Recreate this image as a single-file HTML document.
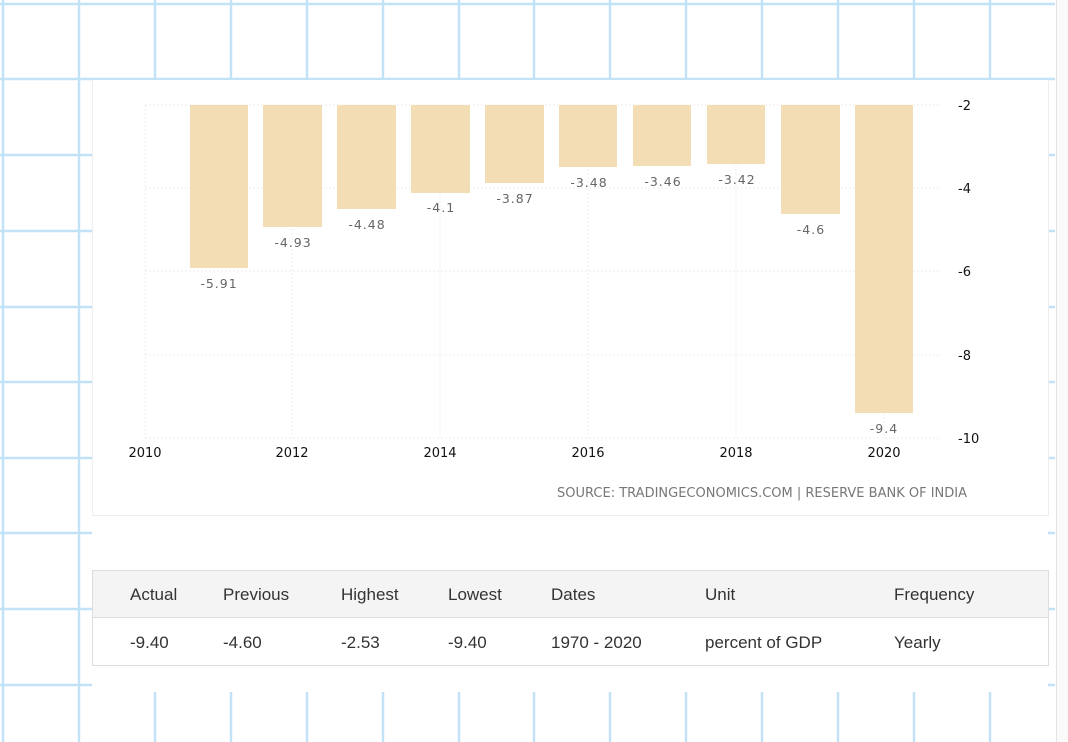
<!DOCTYPE html>
<html><head><meta charset="utf-8"><style>
body{margin:0;width:1068px;height:742px;overflow:hidden;background:#fff;font-family:"Liberation Sans",sans-serif;position:relative}
.g{position:absolute;left:0;top:0}
.panel{position:absolute;left:92px;top:80px;width:956px;height:612px;background:#fff}
.chart{position:absolute;left:92px;top:80px;width:955px;height:435px;border:1px solid #eee;border-top:none}
.tb{position:absolute;left:92px;top:570px;width:955px;height:94px;border:1px solid #ddd;font-size:17px;color:#333}
.hd{position:absolute;left:0;top:0;width:955px;height:46px;background:#f4f4f4;border-bottom:1px solid #ddd}
.c{position:absolute;line-height:20px}
</style></head><body>
<svg class="g" width="1068" height="742">
<g stroke="#c2e3f7" stroke-width="2.5">
<line x1="0" y1="4" x2="1055" y2="4"/>
<line x1="0" y1="79" x2="1055" y2="79"/>
<line x1="0" y1="155" x2="1055" y2="155"/>
<line x1="0" y1="231" x2="1055" y2="231"/>
<line x1="0" y1="307" x2="1055" y2="307"/>
<line x1="0" y1="382" x2="1055" y2="382"/>
<line x1="0" y1="458" x2="1055" y2="458"/>
<line x1="0" y1="533" x2="1055" y2="533"/>
<line x1="0" y1="609" x2="1055" y2="609"/>
<line x1="0" y1="685" x2="1055" y2="685"/>
<line x1="3" y1="0" x2="3" y2="742"/><line x1="79" y1="0" x2="79" y2="742"/>
<line x1="155" y1="0" x2="155" y2="742"/><line x1="231" y1="0" x2="231" y2="742"/>
<line x1="307" y1="0" x2="307" y2="742"/><line x1="383" y1="0" x2="383" y2="742"/>
<line x1="459" y1="0" x2="459" y2="742"/><line x1="534" y1="0" x2="534" y2="742"/>
<line x1="610" y1="0" x2="610" y2="742"/><line x1="686" y1="0" x2="686" y2="742"/>
<line x1="762" y1="0" x2="762" y2="742"/><line x1="838" y1="0" x2="838" y2="742"/>
<line x1="914" y1="0" x2="914" y2="742"/><line x1="990" y1="0" x2="990" y2="742"/>
</g>
<rect x="1056" y="0" width="12" height="742" fill="#fafafa"/>
<line x1="1056.5" y1="0" x2="1056.5" y2="742" stroke="#e5e5e5"/>
</svg>
<div class="panel"></div>
<div class="chart"></div>
<svg class="g" width="1068" height="742" style="font-family:'DejaVu Sans',sans-serif">
<g stroke="#ececec" stroke-dasharray="2,2">
<line x1="145" y1="105" x2="940" y2="105"/>
<line x1="145" y1="188" x2="940" y2="188"/>
<line x1="145" y1="271" x2="940" y2="271"/>
<line x1="145" y1="355" x2="940" y2="355"/>
<line x1="145" y1="438" x2="940" y2="438"/>
<line x1="145" y1="105" x2="145" y2="438"/>
<line x1="292" y1="105" x2="292" y2="438"/>
<line x1="440" y1="105" x2="440" y2="438"/>
<line x1="588" y1="105" x2="588" y2="438"/>
<line x1="736" y1="105" x2="736" y2="438"/>
<line x1="884" y1="105" x2="884" y2="438"/>
</g>
<g fill="#f3ddb4">
<rect x="190" y="105" width="58" height="163"/>
<rect x="263" y="105" width="59" height="122"/>
<rect x="337" y="105" width="59" height="104"/>
<rect x="411" y="105" width="59" height="88"/>
<rect x="485" y="105" width="59" height="78"/>
<rect x="559" y="105" width="58" height="62"/>
<rect x="633" y="105" width="58" height="61"/>
<rect x="707" y="105" width="58" height="59"/>
<rect x="781" y="105" width="59" height="109"/>
<rect x="855" y="105" width="58" height="308"/>
</g>
<g fill="#666" font-size="12.5" text-anchor="middle" letter-spacing="1">
<text x="219" y="288">-5.91</text>
<text x="293" y="247">-4.93</text>
<text x="367" y="229">-4.48</text>
<text x="441" y="212">-4.1</text>
<text x="515" y="203">-3.87</text>
<text x="589" y="187">-3.48</text>
<text x="663" y="186">-3.46</text>
<text x="737" y="184">-3.42</text>
<text x="811" y="234">-4.6</text>
<text x="884" y="433">-9.4</text>
</g>
<g fill="#111" font-size="13">
<text x="958" y="110">-2</text>
<text x="958" y="193">-4</text>
<text x="958" y="276">-6</text>
<text x="958" y="360">-8</text>
<text x="958" y="443">-10</text>
</g>
<g fill="#111" font-size="13" text-anchor="middle">
<text x="145" y="457">2010</text>
<text x="292" y="457">2012</text>
<text x="440" y="457">2014</text>
<text x="588" y="457">2016</text>
<text x="736" y="457">2018</text>
<text x="884" y="457">2020</text>
</g>
<text x="967" y="497" fill="#777" font-size="13" text-anchor="end">SOURCE: TRADINGECONOMICS.COM | RESERVE BANK OF INDIA</text>
</svg>
<div class="tb">
<div class="hd"></div>
<div class="c" style="left:37px;top:14px">Actual</div>
<div class="c" style="left:130px;top:14px">Previous</div>
<div class="c" style="left:248px;top:14px">Highest</div>
<div class="c" style="left:355px;top:14px">Lowest</div>
<div class="c" style="left:458px;top:14px">Dates</div>
<div class="c" style="left:612px;top:14px">Unit</div>
<div class="c" style="left:801px;top:14px">Frequency</div>
<div class="c" style="left:37px;top:62px">-9.40</div>
<div class="c" style="left:130px;top:62px">-4.60</div>
<div class="c" style="left:248px;top:62px">-2.53</div>
<div class="c" style="left:355px;top:62px">-9.40</div>
<div class="c" style="left:458px;top:62px">1970 - 2020</div>
<div class="c" style="left:612px;top:62px">percent of GDP</div>
<div class="c" style="left:801px;top:62px">Yearly</div>
</div>
</body></html>
